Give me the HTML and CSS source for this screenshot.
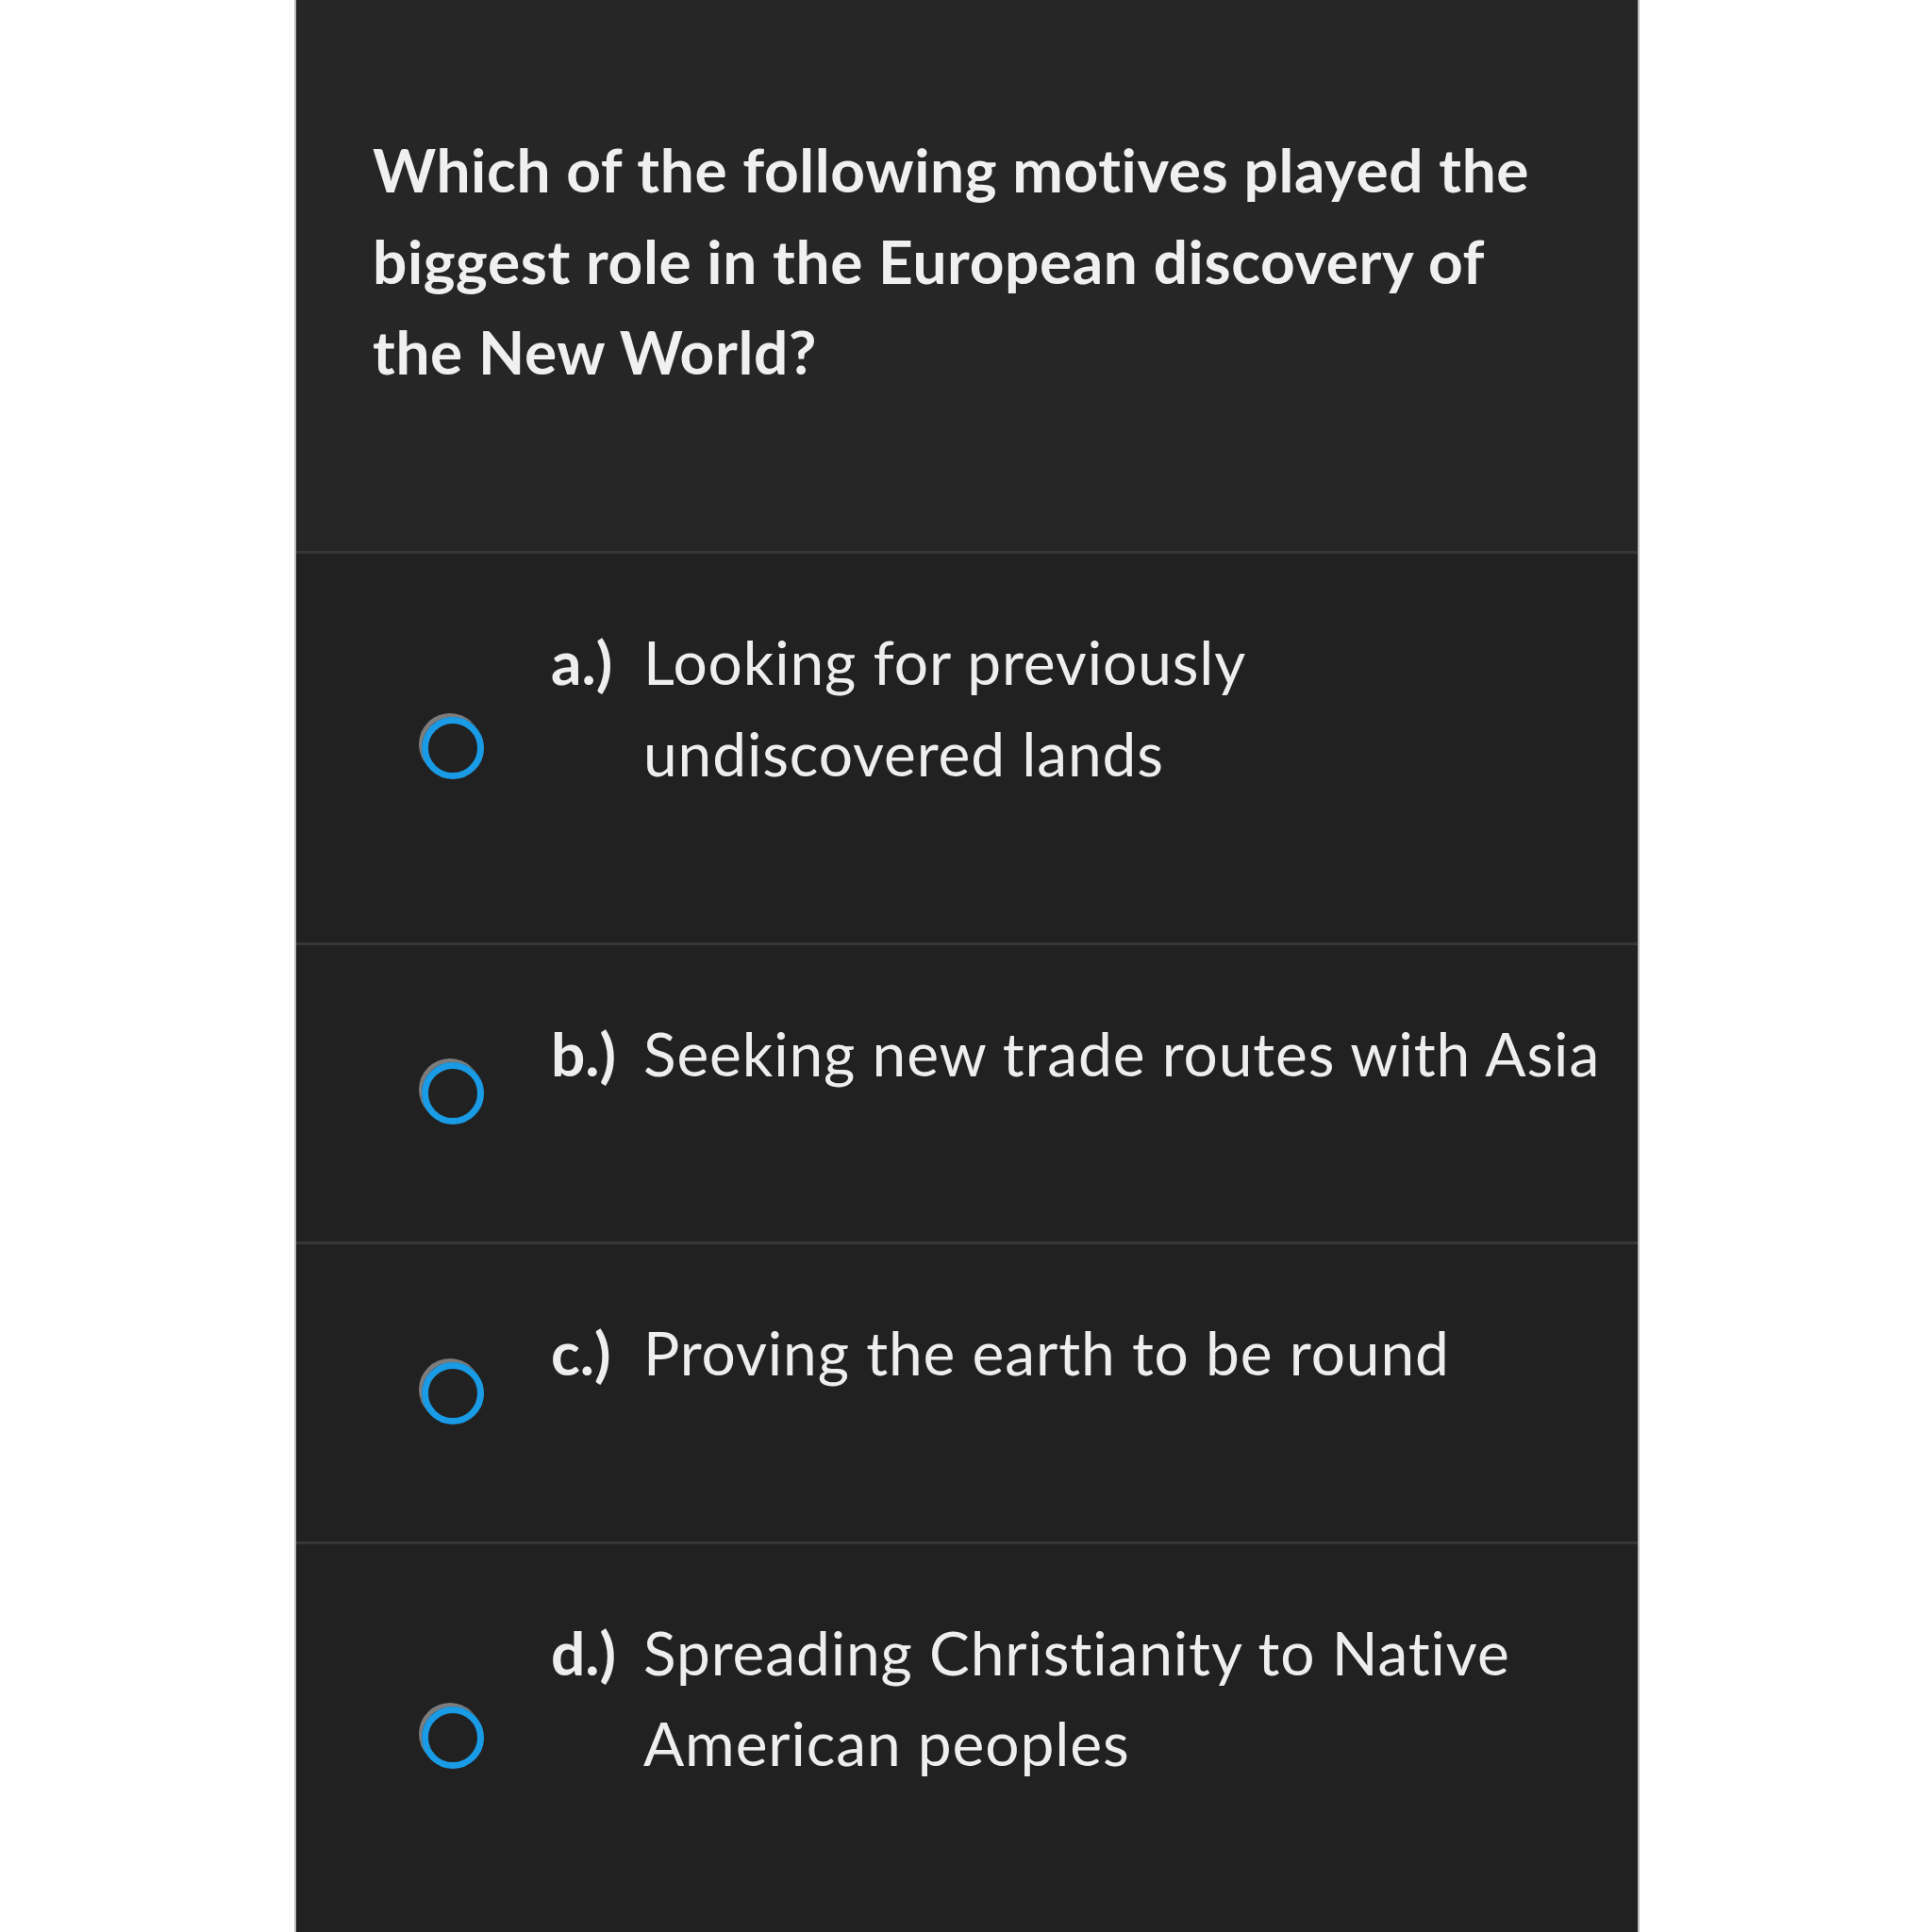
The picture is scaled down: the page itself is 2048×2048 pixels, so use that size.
FILE: index.html
```html
<!DOCTYPE html>
<html>
<head>
<meta charset="utf-8">
<link rel="stylesheet" href="styles.css">
</head>
<body>
<div class="panel">
  <div class="question">Which of the following motives played the biggest role in the European discovery of the New World?</div>
  <div class="option">
    <div class="radio-col"><span class="radio"></span></div>
    <div class="answer"><span class="label">a.)</span><span class="text">Looking for previously undiscovered lands</span></div>
  </div>
  <div class="option">
    <div class="radio-col"><span class="radio"></span></div>
    <div class="answer"><span class="label">b.)</span><span class="text">Seeking new trade routes with Asia</span></div>
  </div>
  <div class="option">
    <div class="radio-col"><span class="radio"></span></div>
    <div class="answer"><span class="label">c.)</span><span class="text">Proving the earth to be round</span></div>
  </div>
  <div class="option last">
    <div class="radio-col"><span class="radio"></span></div>
    <div class="answer"><span class="label">d.)</span><span class="text">Spreading Christianity to Native American peoples</span></div>
  </div>
</div>
</body>
</html>
```
FILE: styles.css
```css
html, body {
  margin: 0;
  padding: 0;
  background: #ffffff;
}
body {
  font-family: Lato, "Liberation Sans", sans-serif;
  color: #eeeeee;
  font-variant-ligatures: none;
}
.panel {
  margin-left: 312px;
  width: 1422px;
  height: 2048px;
  background: #212121;
  border-left: 2px solid #bcbcbc;
  border-right: 2px solid #bcbcbc;
  display: flex;
  flex-direction: column;
}
.question {
  background: #262626;
  padding: 132px 90px 0 81px;
  height: 459px;
  font-size: 64px;
  font-weight: 700;
  line-height: 96.6px;
  letter-spacing: 0.6px;
  color: #f0f0f0;
}
.option {
  display: flex;
  border-top: 3px solid #363636;
}
.option.last {
  flex: 1;
}
.radio-col {
  width: 66px;
  padding-left: 133px;
  display: flex;
  align-items: center;
}
.radio {
  width: 52px;
  height: 52px;
  border: 7px solid #1a9be6;
  border-radius: 50%;
  box-shadow: -3px -4px 0 0 #7c7c7c;
}
.answer {
  display: flex;
  padding: 67px 20px 151px 71px;
  font-size: 64px;
  line-height: 96.6px;
}
.label {
  width: 98px;
  flex: none;
  font-weight: 700;
}
.text {
  font-weight: 400;
  letter-spacing: 0.9px;
  max-width: 1024px;
}
```
